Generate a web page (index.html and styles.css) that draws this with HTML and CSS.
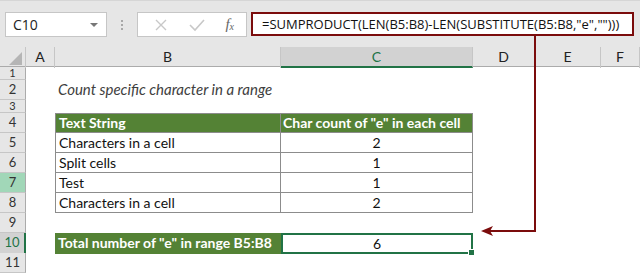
FILE: index.html
```html
<!DOCTYPE html>
<html lang="en">

<head>
    <meta charset="UTF-8">
    <title>Count specific character in a range</title>
    <link rel="stylesheet" href="styles.css">
</head>

<body>

    <div class="toolbar">
        <div class="name-box">
            <span>C10</span>
            <span class="caret"></span>
        </div>
        <div class="grip"><i></i><i></i><i></i></div>
        <div class="fx-box">
            <svg width="14" height="14" viewBox="0 0 14 14"><path d="M2 2 L12 12 M12 2 L2 12" stroke="#c8c8c8" stroke-width="1.4" fill="none"/></svg>
            <svg width="16" height="14" viewBox="0 0 16 14"><path d="M1 7 L6 12 L15 2" stroke="#c8c8c8" stroke-width="1.6" fill="none"/></svg>
            <span class="fx">f<sub>x</sub></span>
        </div>
        <div class="formula">=SUMPRODUCT(LEN(B5:B8)-LEN(SUBSTITUTE(B5:B8,"e","")))</div>
    </div>

    <div class="sheet">
        <div class="row head">
            <div class="corner"><span class="tri"></span></div>
            <div class="ch">A</div>
            <div class="ch">B</div>
            <div class="ch active">C</div>
            <div class="ch">D</div>
            <div class="ch">E</div>
            <div class="ch">F</div>
        </div>
        <div class="row r-short">
            <div class="rh">1</div>
        </div>
        <div class="row">
            <div class="rh">2</div><div></div>
            <div class="title">Count specific character in a range</div>
        </div>
        <div class="row r-short">
            <div class="rh">3</div>
        </div>
        <div class="row">
            <div class="rh">4</div><div></div>
            <div class="cell th first">Text String</div>
            <div class="cell th num">Char count of "e" in each cell</div>
        </div>
        <div class="row">
            <div class="rh">5</div><div></div>
            <div class="cell first">Characters in a cell</div>
            <div class="cell num">2</div>
        </div>
        <div class="row">
            <div class="rh">6</div><div></div>
            <div class="cell first">Split cells</div>
            <div class="cell num">1</div>
        </div>
        <div class="row">
            <div class="rh marked">7</div><div></div>
            <div class="cell first">Test</div>
            <div class="cell num">1</div>
        </div>
        <div class="row">
            <div class="rh">8</div><div></div>
            <div class="cell first">Characters in a cell</div>
            <div class="cell num">2</div>
        </div>
        <div class="row">
            <div class="rh">9</div>
        </div>
        <div class="row">
            <div class="rh active">10</div><div></div>
            <div class="total">Total number of "e" in range B5:B8</div>
            <div class="selected">6<span class="handle"></span></div>
        </div>
        <div class="row">
            <div class="rh">11</div>
        </div>

        <svg class="pointer" width="60" height="210" viewBox="0 0 60 210">
            <path d="M58 0 V196 H10" stroke="#7b0c0c" stroke-width="2" fill="none"/>
            <path d="M4 196 L16 191 L13 196 L16 201 Z" fill="#7b0c0c"/>
        </svg>
    </div>

</body>

</html>
```

FILE: styles.css
```css
body {
    margin: 0;
    width: 640px;
    height: 273px;
    overflow: hidden;
    background-color: #fff;
    font-family: Lato, "Open Sans", sans-serif;
}

.toolbar {
    height: 47px;
    background-color: #e6e6e6;
    border-top: 1px solid #d6d6d6;
    box-sizing: border-box;
    display: flex;
    align-items: flex-start;
    padding: 11px 0 0 5px;
}

.name-box {
    width: 102px;
    height: 25px;
    box-sizing: border-box;
    background-color: #fff;
    border: 1px solid #c6c6c6;
    display: flex;
    align-items: center;
    justify-content: space-between;
    padding: 0 8px 0 7px;
    font-family: "Open Sans", sans-serif;
    font-size: 14px;
    color: #222;
}

.caret {
    width: 0;
    height: 0;
    border-left: 4px solid transparent;
    border-right: 4px solid transparent;
    border-top: 4px solid #777;
}

.grip {
    width: 30px;
    display: flex;
    flex-direction: column;
    align-items: center;
    gap: 2px;
    padding-top: 8px;
}

.grip i {
    width: 2px;
    height: 2px;
    background-color: #a8a8a8;
}

.fx-box {
    width: 110px;
    height: 25px;
    box-sizing: border-box;
    background-color: #fff;
    border: 1px solid #c6c6c6;
    display: flex;
    align-items: center;
    justify-content: space-between;
    padding: 0 12px 0 16px;
    margin-right: 4px;
}

.fx {
    font-family: "Liberation Serif", serif;
    font-style: italic;
    font-size: 15px;
    color: #666;
}

.fx sub {
    font-size: 10px;
    vertical-align: -1px;
}

.formula {
    width: 383px;
    height: 24px;
    box-sizing: border-box;
    background-color: #fff;
    border: 2px solid #7b0c0c;
    padding-left: 9px;
    font-family: "Open Sans", sans-serif;
    font-size: 13px;
    line-height: 20px;
    color: #111;
    white-space: nowrap;
    overflow: hidden;
}

.sheet {
    position: relative;
}

.row {
    display: grid;
    grid-template-columns: 26px 29px 226px 192px 62px 66px 1fr;
    height: 20px;
}

.row.r-short {
    height: 13px;
}

.row.head {
    background-color: #e6e6e6;
    border-bottom: 1px solid #ababab;
    box-sizing: border-box;
}

.corner {
    position: relative;
    border-right: 1px solid #c6c6c6;
}

.tri {
    position: absolute;
    right: 3px;
    bottom: 3px;
    width: 0;
    height: 0;
    border-left: 13px solid transparent;
    border-bottom: 13px solid #b5b5b5;
}

.ch {
    border-right: 1px solid #c6c6c6;
    text-align: center;
    font-size: 14px;
    line-height: 20px;
    color: #222;
}

.ch.active {
    background-color: #d2d2d2;
    border-bottom: 2px solid #217346;
    color: #217346;
    line-height: 19px;
}

.rh {
    background-color: #e6e6e6;
    border-right: 1px solid #ababab;
    border-bottom: 1px solid #c6c6c6;
    box-sizing: border-box;
    text-align: center;
    font-size: 13px;
    line-height: 19px;
    color: #333;
    overflow: hidden;
}

.r-short .rh {
    font-size: 11px;
    line-height: 12px;
}

.rh.marked {
    background-color: #a1d7b8;
}

.rh.active {
    background-color: #d2d2d2;
    border-right: 2px solid #217346;
    color: #217346;
}

.title {
    font-style: italic;
    font-size: 15px;
    line-height: 19px;
    color: #404040;
    padding-left: 3px;
    white-space: nowrap;
}

.cell {
    border-right: 1px solid #8c8c8c;
    border-bottom: 1px solid #8c8c8c;
    box-sizing: border-box;
    padding-left: 3px;
    font-size: 14px;
    line-height: 19px;
    color: #111;
    white-space: nowrap;
}

.cell.first {
    border-left: 1px solid #8c8c8c;
}

.cell.th {
    background-color: #548235;
    color: #fff;
    font-weight: bold;
    border-top: 1px solid #8c8c8c;
    line-height: 18px;
}

.cell.num {
    text-align: center;
    padding-left: 0;
}

.cell.th.num {
    text-align: left;
    padding-left: 2px;
}

.total {
    background-color: #548235;
    color: #fff;
    font-weight: bold;
    font-size: 14px;
    line-height: 20px;
    padding-left: 3px;
    white-space: nowrap;
}

.selected {
    position: relative;
    border: 2px solid #217346;
    box-sizing: border-box;
    text-align: center;
    font-size: 14px;
    line-height: 17px;
    color: #111;
}

.handle {
    position: absolute;
    right: -4px;
    bottom: -4px;
    width: 5px;
    height: 5px;
    background-color: #217346;
    border: 1px solid #fff;
}

.pointer {
    position: absolute;
    left: 477px;
    top: -12px;
}
```
